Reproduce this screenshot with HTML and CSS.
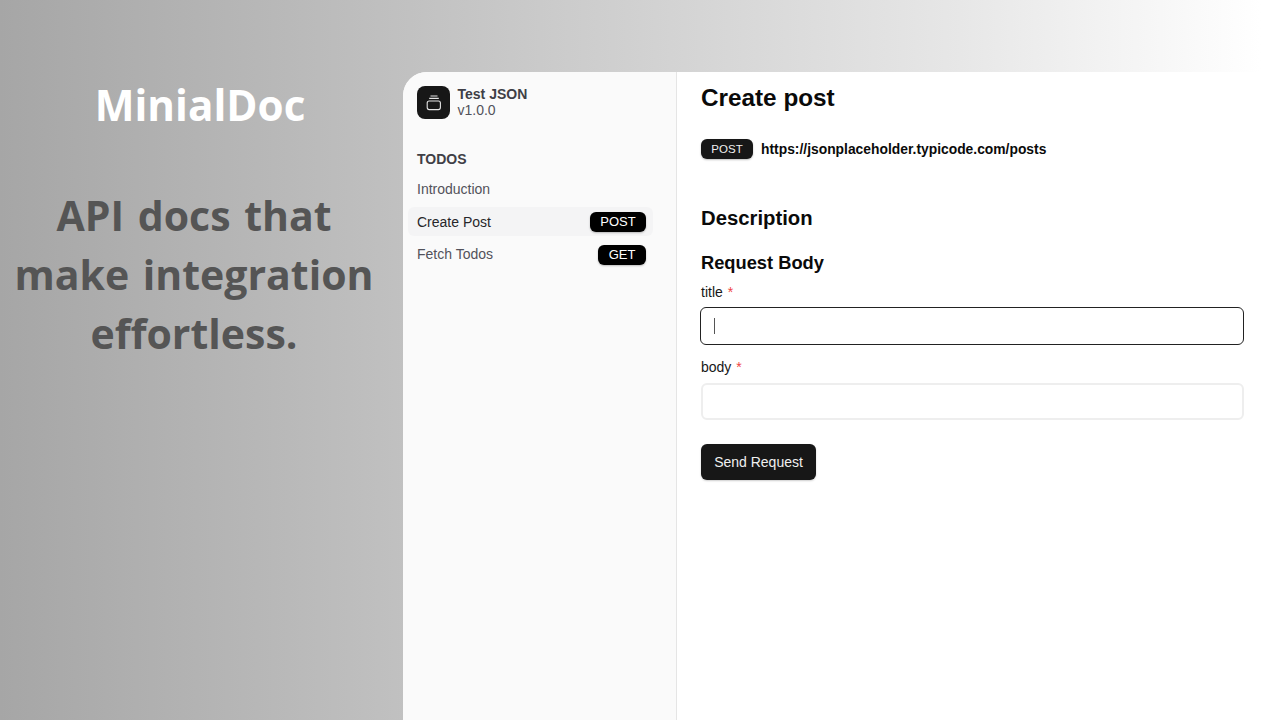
FILE: index.html
```html
<!DOCTYPE html>
<html lang="en">
<head>
<meta charset="utf-8">
<title>MinialDoc</title>
<link rel="stylesheet" href="styles.css">
</head>
<body>
<div class="stage">
  <section class="hero">
    <h1 class="brand">MinialDoc</h1>
    <p class="tagline">API docs that make integration effortless.</p>
  </section>
  <div class="app">
    <aside class="sidebar">
      <div class="project">
        <div class="logo">
          <svg width="16" height="16" viewBox="0 0 16 16" fill="none" stroke="#e4e4e4" stroke-width="1.1">
            <path d="M4.5 1h7M3.2 3.4h9.6"/>
            <rect x="1.2" y="6" width="13.2" height="8.6" rx="2"/>
          </svg>
        </div>
        <div class="project-text">
          <div class="project-name">Test JSON</div>
          <div class="project-version">v1.0.0</div>
        </div>
      </div>
      <div class="group-title">TODOS</div>
      <nav class="nav">
        <div class="nav-item">Introduction</div>
        <div class="nav-item active"><span>Create Post</span><span class="pill pill-post">POST</span></div>
        <div class="nav-item"><span>Fetch Todos</span><span class="pill pill-get">GET</span></div>
      </nav>
    </aside>
    <main class="content">
      <h2 class="page-title">Create post</h2>
      <div class="endpoint">
        <span class="method">POST</span>
        <span class="url">https://jsonplaceholder.typicode.com/posts</span>
      </div>
      <h3 class="section-title">Description</h3>
      <h4 class="sub-title">Request Body</h4>
      <form class="form">
        <label class="field">
          <span class="field-label">title <em class="req">*</em></span>
          <span class="input focused"><i class="caret"></i></span>
        </label>
        <label class="field">
          <span class="field-label">body <em class="req">*</em></span>
          <span class="input"></span>
        </label>
        <button class="send" type="button">Send Request</button>
      </form>
    </main>
  </div>
</div>
</body>
</html>
```
FILE: styles.css
```css
* { box-sizing: border-box; }
html, body { margin: 0; height: 100%; overflow: hidden; }
body { font-family: "Liberation Sans", Arial, sans-serif; color: #0a0a0a; background: #fff; }

.stage {
  display: flex;
  height: 720px;
  background: linear-gradient(90deg, #a6a6a6 0%, #c1c1c1 32%, #e7e7e7 75%, #ffffff 98.5%);
}

.hero { width: 403px; flex: none; padding-top: 75px; font-family: "Open Sans", sans-serif; text-align: center; }
.brand { margin: 0; padding-right: 3px; font-size: 42.2px; line-height: 60px; font-weight: 700; color: #fff; }
.tagline {
  margin: 51px 0 0;
  padding: 0 15px 0 0;
  font-size: 41px;
  word-spacing: 3px;
  line-height: 59px;
  font-weight: 700;
  color: #555555;
}

.app {
  flex: 1;
  display: flex;
  margin-top: 72px;
  background: #fff;
  border-top-left-radius: 24px;
  overflow: hidden;
}

.sidebar { width: 274px; flex: none; background: #fafafa; border-right: 1px solid #e5e5e5; padding: 14px 0 0 5px; }
.project { display: flex; align-items: center; gap: 7.5px; padding-left: 9px; }
.logo { width: 33px; height: 33px; border-radius: 8px; background: #171717; display: flex; align-items: center; justify-content: center; }
.project-text { margin-top: -1px; font-size: 14px; line-height: 16px; }
.project-name { font-weight: 700; color: #3f3f46; }
.project-version { color: #52525b; }

.group-title { margin-top: 31px; padding-left: 9px; font-size: 14px; line-height: 18px; font-weight: 700; color: #3f3f46; }
.nav { margin-top: 6.5px; display: flex; flex-direction: column; width: 245px; }
.nav-item {
  height: 29px;
  margin-bottom: 3.5px;
  padding: 0 7px 0 9px;
  display: flex;
  align-items: center;
  justify-content: space-between;
  font-size: 14px;
  color: #52525b;
  border-radius: 6px;
}
.nav-item.active { background: #f4f4f5; color: #27272a; }
.pill {
  height: 20px;
  border-radius: 6px;
  background: #000;
  color: #fff;
  font-size: 13px;
  line-height: 20px;
  text-align: center;
  box-shadow: 0 1px 2px rgba(0,0,0,.25);
}
.pill-post { width: 56px; }
.pill-get { width: 48px; margin-top: 1px; }

.content { flex: 1; padding: 12px 36px 0 24px; }
.page-title { margin: 0; font-size: 24.3px; line-height: 28px; font-weight: 700; }
.endpoint { display: flex; align-items: center; gap: 8px; margin-top: 27px; }
.method {
  width: 52px;
  height: 20px;
  border-radius: 6px;
  background: #171717;
  color: #f0f0f0;
  font-size: 11.5px;
  line-height: 20px;
  text-align: center;
  box-shadow: 0 1px 2px rgba(0,0,0,.25);
}
.url { font-size: 13.85px; font-weight: 700; color: #0a0a0a; line-height: 20px; }
.section-title { margin: 47px 0 0; font-size: 20.3px; line-height: 24px; font-weight: 700; }
.sub-title { margin: 21px 0 0; font-size: 18.3px; line-height: 24px; font-weight: 700; }

.form { display: flex; flex-direction: column; margin-top: 7px; }
.field { display: flex; flex-direction: column; margin-bottom: 11px; }
.field-label { font-size: 14px; line-height: 20px; color: #171717; margin-bottom: 6px; word-spacing: 1px; }
.req { font-style: normal; color: #ef4444; }
.input {
  display: flex;
  align-items: center;
  height: 37px;
  width: 543px;
  border: 2px solid #eeeeee;
  border-radius: 6px;
  background: #fff;
  padding-left: 11px;
}
.input.focused { width: 544px; height: 38px; margin: -1px 0 1px -1px; border: 1.5px solid #222; padding-left: 13px; }
.caret { width: 1px; height: 16px; background: #555; }
.send {
  align-self: flex-start;
  margin-top: 13px;
  width: 115px;
  height: 36px;
  padding: 0 0 1px;
  border: 0;
  border-radius: 6px;
  background: #171717;
  color: #f0f0f0;
  font: 14px "Liberation Sans", Arial, sans-serif;
  box-shadow: 0 1px 2px rgba(0,0,0,.2);
}
```
